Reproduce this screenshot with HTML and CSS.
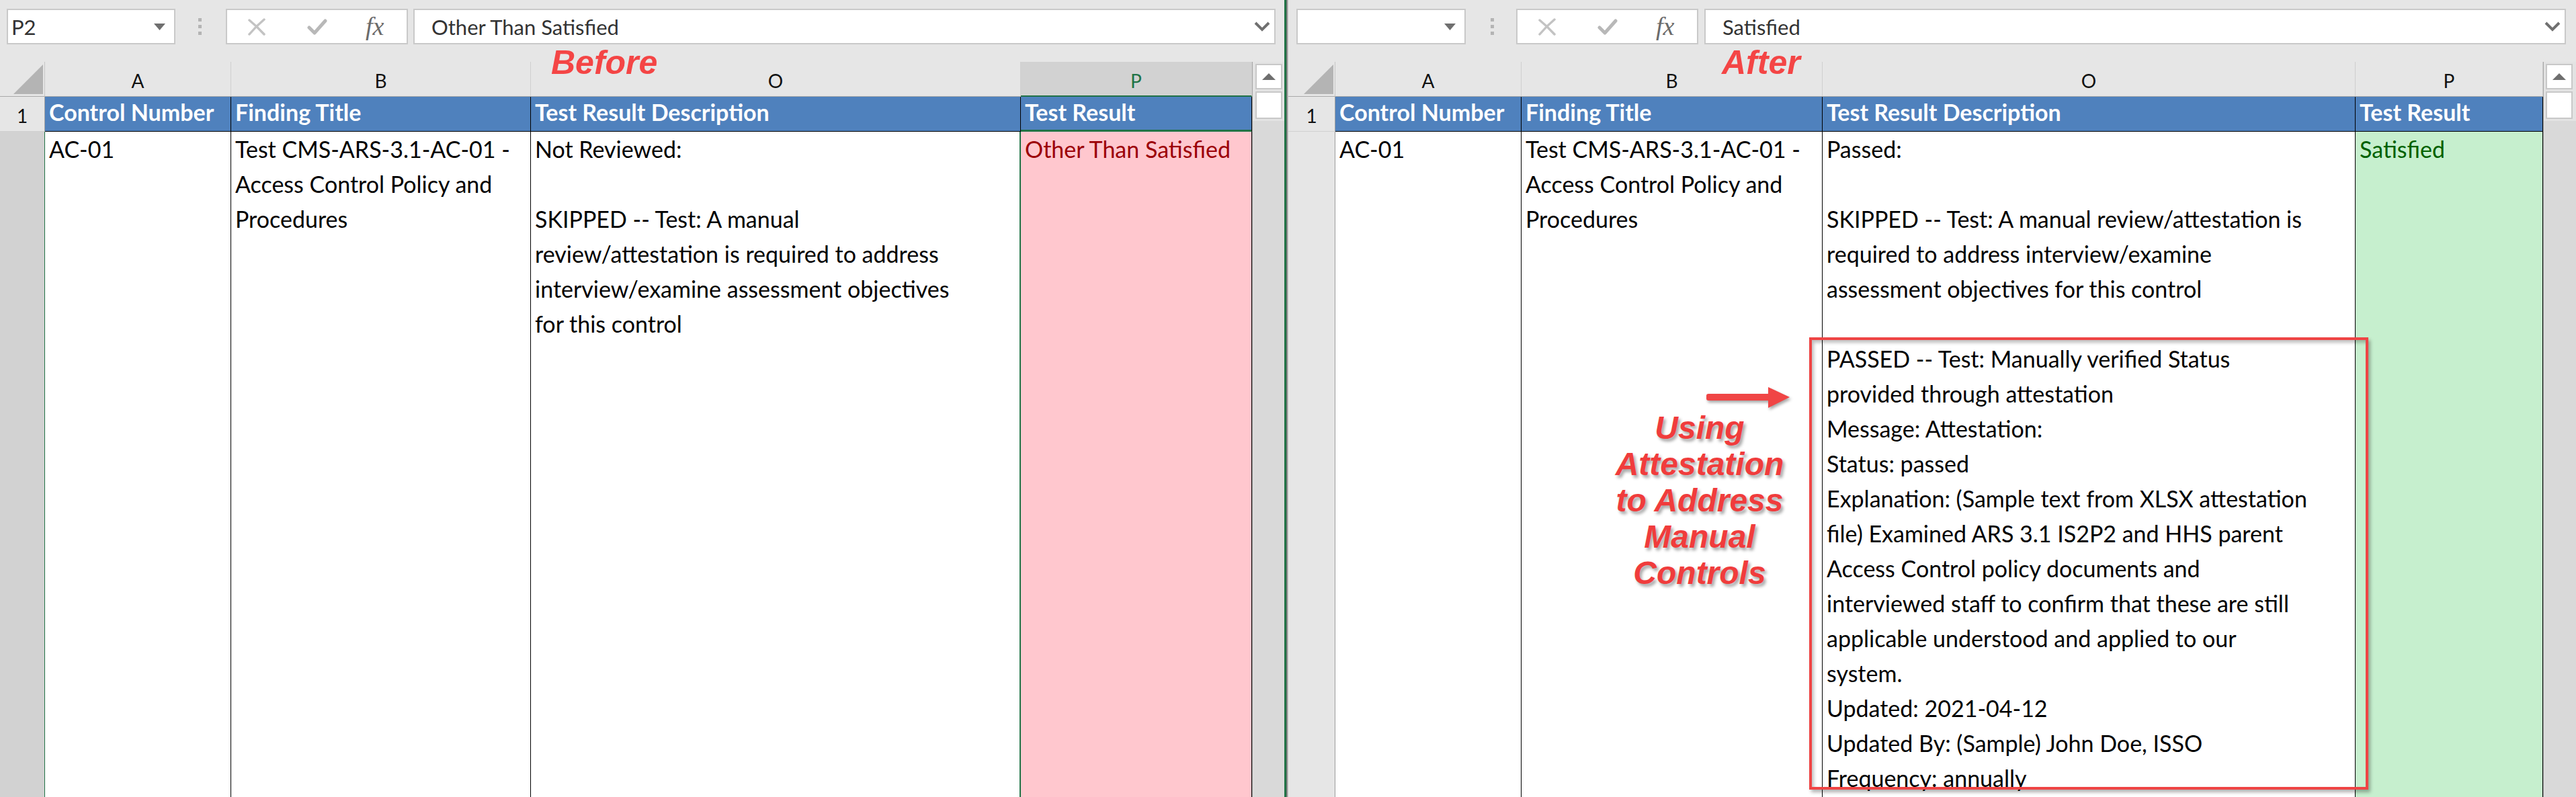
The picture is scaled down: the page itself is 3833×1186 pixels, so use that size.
FILE: index.html
```html
<!DOCTYPE html>
<html lang="en">
<head>
<meta charset="utf-8">
<title>Before / After attestation</title>
<link rel="stylesheet" href="styles.css">
</head>
<body>
<div class="app">
  <section class="pane pane-left">
    <div class="toolbar">
      <div class="namebox"><span class="nb-text">P2</span><svg class="nb-caret" width="17" height="10" viewBox="0 0 17 10"><polygon points="0,0 17,0 8.5,10" fill="#6f6f6f"/></svg></div>
      <div class="grip"><i></i><i></i><i></i></div>
      <div class="fxbox">
        <svg class="ic-x" width="28" height="26" viewBox="0 0 28 26"><path d="M3 3 Q14 12 25 24 M25 2 Q13 12 3 24" fill="none" stroke="#c3c3c3" stroke-width="3.5" stroke-linecap="round"/></svg>
        <svg class="ic-check" width="30" height="26" viewBox="0 0 30 26"><path d="M3 14 L11 22 L27 4" fill="none" stroke="#b8b8b8" stroke-width="5" stroke-linecap="round" stroke-linejoin="round"/></svg>
        <span class="fx">fx</span>
      </div>
      <div class="formula"><span class="f-text">Other Than Satisfied</span><svg class="chev" width="24" height="15" viewBox="0 0 24 15"><polyline points="2,2 12,12 22,2" fill="none" stroke="#707070" stroke-width="4"/></svg></div>
    </div>
    <div class="sheet">
      <div class="grid">
        <div class="corner"><span class="tri"></span></div>
        <div class="colhead">A</div>
        <div class="colhead">B</div>
        <div class="colhead">O</div>
        <div class="colhead colhead-sel">P</div>

        <div class="rowhead">1</div>
        <div class="hcell">Control Number</div>
        <div class="hcell">Finding Title</div>
        <div class="hcell">Test Result Description</div>
        <div class="hcell hcell-sel">Test Result</div>

        <div class="rowhead-data rowhead-sel"></div>
        <div class="cell"><div class="ln">AC-01</div></div>
        <div class="cell">
          <div class="ln">Test CMS-ARS-3.1-AC-01 -</div>
          <div class="ln">Access Control Policy and</div>
          <div class="ln">Procedures</div>
        </div>
        <div class="cell">
          <div class="ln">Not Reviewed:</div>
          <div class="ln"></div>
          <div class="ln">SKIPPED -- Test: A manual</div>
          <div class="ln">review/attestation is required to address</div>
          <div class="ln">interview/examine assessment objectives</div>
          <div class="ln">for this control</div>
        </div>
        <div class="cell cell-bad"><div class="ln">Other Than Satisfied</div></div>
      </div>
      <div class="vscroll">
        <div class="vs-up"><span class="vs-tri"></span></div>
        <div class="vs-thumb"></div>
      </div>
    </div>
  </section>

  <div class="divider"></div>

  <section class="pane pane-right">
    <div class="toolbar">
      <div class="namebox"><span class="nb-text"></span><svg class="nb-caret" width="17" height="10" viewBox="0 0 17 10"><polygon points="0,0 17,0 8.5,10" fill="#6f6f6f"/></svg></div>
      <div class="grip"><i></i><i></i><i></i></div>
      <div class="fxbox">
        <svg class="ic-x" width="28" height="26" viewBox="0 0 28 26"><path d="M3 3 Q14 12 25 24 M25 2 Q13 12 3 24" fill="none" stroke="#c3c3c3" stroke-width="3.5" stroke-linecap="round"/></svg>
        <svg class="ic-check" width="30" height="26" viewBox="0 0 30 26"><path d="M3 14 L11 22 L27 4" fill="none" stroke="#b8b8b8" stroke-width="5" stroke-linecap="round" stroke-linejoin="round"/></svg>
        <span class="fx">fx</span>
      </div>
      <div class="formula"><span class="f-text">Satisfied</span><svg class="chev" width="24" height="15" viewBox="0 0 24 15"><polyline points="2,2 12,12 22,2" fill="none" stroke="#707070" stroke-width="4"/></svg></div>
    </div>
    <div class="sheet">
      <div class="grid">
        <div class="corner"><span class="tri"></span></div>
        <div class="colhead">A</div>
        <div class="colhead">B</div>
        <div class="colhead">O</div>
        <div class="colhead">P</div>

        <div class="rowhead">1</div>
        <div class="hcell">Control Number</div>
        <div class="hcell">Finding Title</div>
        <div class="hcell">Test Result Description</div>
        <div class="hcell">Test Result</div>

        <div class="rowhead-data"></div>
        <div class="cell"><div class="ln">AC-01</div></div>
        <div class="cell">
          <div class="ln">Test CMS-ARS-3.1-AC-01 -</div>
          <div class="ln">Access Control Policy and</div>
          <div class="ln">Procedures</div>
        </div>
        <div class="cell">
          <div class="ln">Passed:</div>
          <div class="ln"></div>
          <div class="ln">SKIPPED -- Test: A manual review/attestation is</div>
          <div class="ln">required to address interview/examine</div>
          <div class="ln">assessment objectives for this control</div>
          <div class="ln"></div>
          <div class="ln">PASSED -- Test: Manually verified Status</div>
          <div class="ln">provided through attestation</div>
          <div class="ln">Message: Attestation:</div>
          <div class="ln">Status: passed</div>
          <div class="ln">Explanation: (Sample text from XLSX attestation</div>
          <div class="ln">file) Examined ARS 3.1 IS2P2 and HHS parent</div>
          <div class="ln">Access Control policy documents and</div>
          <div class="ln">interviewed staff to confirm that these are still</div>
          <div class="ln">applicable understood and applied to our</div>
          <div class="ln">system.</div>
          <div class="ln">Updated: 2021-04-12</div>
          <div class="ln">Updated By: (Sample) John Doe, ISSO</div>
          <div class="ln">Frequency: annually</div>
        </div>
        <div class="cell cell-good"><div class="ln">Satisfied</div></div>
      </div>
      <div class="vscroll">
        <div class="vs-up"><span class="vs-tri"></span></div>
        <div class="vs-thumb"></div>
      </div>
    </div>
  </section>

  <div class="label label-before">Before</div>
  <div class="label label-after">After</div>
  <div class="redbox"></div>
  <svg class="arrow" width="130" height="38" viewBox="0 0 130 38"><rect x="2" y="12" width="96" height="10" rx="3" fill="#f04545"/><polygon points="94,2 126,17 94,33" fill="#f04545"/></svg>
  <div class="callout">Using<br>Attestation<br>to Address<br>Manual<br>Controls</div>
</div>
</body>
</html>
```

FILE: styles.css
```css
* { box-sizing: border-box; }

html, body {
  margin: 0;
  padding: 0;
}

body {
  width: 3833px;
  height: 1186px;
  overflow: hidden;
  background: #e6e6e6;
  font-family: "Lato", "Liberation Sans", sans-serif;
  color: #000;
}

.app {
  position: relative;
  display: flex;
  width: 3833px;
  height: 1186px;
}

.pane {
  display: flex;
  flex-direction: column;
  height: 1186px;
  background: #e6e6e6;
}

.pane-left { width: 1911px; }
.pane-right { width: 1916px; }

.divider {
  width: 6px;
  height: 1186px;
  background: linear-gradient(to right, #217346 0, #217346 3px, #5e5e5e 3px, #9a9a9a 4.5px, #d6d6d6 6px);
}

/* ---------- toolbar ---------- */
.toolbar {
  height: 92px;
  flex: none;
  display: flex;
  align-items: flex-start;
  padding-top: 13px;
}

.pane-left .toolbar { padding-left: 10px; }
.pane-right .toolbar { padding-left: 12px; }

.namebox {
  width: 251px;
  height: 53px;
  background: #fff;
  border: 2px solid #c9c9c9;
  display: flex;
  align-items: center;
  justify-content: space-between;
  padding: 0 13px 0 5px;
}

.pane-right .namebox { width: 252px; }

.nb-text {
  font-size: 31px;
  color: #333;
}

.grip {
  width: 5px;
  margin-top: 14px;
  margin-left: 34px;
  display: flex;
  flex-direction: column;
  gap: 5px;
}

.pane-right .grip { margin-left: 37px; }

.grip i {
  display: block;
  width: 5px;
  height: 5px;
  background: #b4b4b4;
}

.fxbox {
  width: 271px;
  height: 53px;
  margin-left: 36px;
  background: #fff;
  border: 2px solid #c9c9c9;
  display: flex;
  align-items: center;
  padding-left: 30px;
}

.pane-right .fxbox { margin-left: 33px; }

.ic-check { margin-left: 61px; }

.fx {
  margin-left: 57px;
  font-family: "Liberation Serif", serif;
  font-style: italic;
  font-size: 38px;
  line-height: 1;
  color: #6b6b6b;
  position: relative;
  top: -1px;
}

.formula {
  flex: 1;
  height: 53px;
  margin-left: 8px;
  margin-right: 13px;
  background: #fff;
  border: 2px solid #c9c9c9;
  display: flex;
  align-items: center;
  justify-content: space-between;
  padding: 0 6px 0 25px;
}

.pane-right .formula { margin-left: 9px; margin-right: 15px; }

.f-text {
  font-size: 31px;
  color: #333;
}

/* ---------- sheet ---------- */
.sheet {
  flex: 1;
  display: flex;
  min-height: 0;
}

.grid {
  display: grid;
  grid-template-rows: 52px 52px 1fr;
}

.pane-left .grid { grid-template-columns: 67px 277px 446px 729px 344px; }
.pane-right .grid { grid-template-columns: 70px 277px 448px 793px 279px; }

.corner {
  background: #e6e6e6;
  border-right: 1px solid #c6c6c6;
  border-bottom: 1px solid #a9a9a9;
  display: flex;
  justify-content: flex-end;
  align-items: flex-end;
  padding: 0 2px 3px 0;
}

.tri {
  width: 0;
  height: 0;
  border-left: 44px solid transparent;
  border-bottom: 44px solid #b4b4b4;
}

.colhead {
  background: #e6e6e6;
  border-right: 1px solid #cfcfcf;
  border-bottom: 1px solid #a9a9a9;
  text-align: center;
  font-size: 28px;
  line-height: 45px;
  padding-top: 6px;
  color: #111;
}

.colhead-sel {
  background: #d2d2d2;
  color: #217346;
  border-bottom: 2px solid #217346;
}

.rowhead {
  background: #e6e6e6;
  border-right: 1px solid #a3a3a3;
  border-bottom: 1px solid #d0d0d0;
  text-align: center;
  font-size: 28px;
  line-height: 51px;
  padding-top: 3px;
  color: #111;
}

.hcell {
  background: #4f81bd;
  color: #fff;
  font-weight: 700;
  font-size: 34px;
  line-height: 46px;
  padding-left: 6px;
  white-space: nowrap;
  overflow: hidden;
  border-right: 1px solid #000;
  border-bottom: 1px solid #000;
}

.hcell-sel {
  border-bottom-color: #217346;
  box-shadow: inset 0 -2px 0 #217346;
}

.rowhead-data {
  background: #e6e6e6;
  border-right: 1px solid #9c9c9c;
}

.rowhead-sel {
  background: #d2d2d2;
  border-right-color: #217346;
  box-shadow: 1px 0 0 #217346;
}

.cell {
  background: #fff;
  border-right: 1px solid #000;
  padding: 0 6px;
  font-size: 34px;
  overflow: visible;
  min-width: 0;
}

.ln {
  height: 52px;
  line-height: 52px;
  white-space: nowrap;
}

.cell-bad {
  background: #ffc7ce;
  color: #9c0006;
  box-shadow: -2px 0 0 #217346;
}

.cell-good {
  background: #c6efce;
  color: #006100;
}

/* ---------- vertical scrollbar ---------- */
.vscroll {
  flex: 1;
  border-left: 1px solid #a6a6a6;
  background: linear-gradient(#e3e3e3 0, #e3e3e3 88px, #d9d9d9 88px);
  padding: 3px 3px 0 4px;
  display: flex;
  flex-direction: column;
  gap: 3px;
}

.pane-right .vscroll { padding: 3px 5px 0 3px; }

.vs-up {
  height: 38px;
  background: #fff;
  border: 2px solid #c8c8c8;
  display: flex;
  align-items: center;
  justify-content: center;
}

.vs-tri {
  width: 0;
  height: 0;
  border-left: 10px solid transparent;
  border-right: 10px solid transparent;
  border-bottom: 10px solid #6e6e6e;
}

.vs-thumb {
  height: 41px;
  background: #fff;
  border: 2px solid #c8c8c8;
}

/* ---------- annotations (overlays) ---------- */
.label {
  position: absolute;
  top: 68px;
  font-family: "Liberation Sans", Arial, sans-serif;
  font-weight: 700;
  font-style: italic;
  font-size: 50px;
  line-height: 50px;
  color: #f44545;
}

.label-before { left: 820px; }
.label-after { left: 2562px; }

.redbox {
  position: absolute;
  left: 2692px;
  top: 502px;
  width: 832px;
  height: 673px;
  border: 4px solid #ef4444;
  box-shadow: 3px 4px 5px rgba(0, 0, 0, 0.3), inset 3px 4px 5px rgba(0, 0, 0, 0.25);
}

.arrow {
  position: absolute;
  left: 2537px;
  top: 574px;
  filter: drop-shadow(2px 3px 2px rgba(0, 0, 0, 0.35));
}

.callout {
  position: absolute;
  left: 2369px;
  top: 610px;
  width: 320px;
  text-align: center;
  font-family: "Liberation Sans", Arial, sans-serif;
  font-weight: 700;
  font-style: italic;
  font-size: 48px;
  line-height: 54px;
  color: #f03c3c;
  text-shadow: 3px 4px 4px rgba(0, 0, 0, 0.35);
}
```
